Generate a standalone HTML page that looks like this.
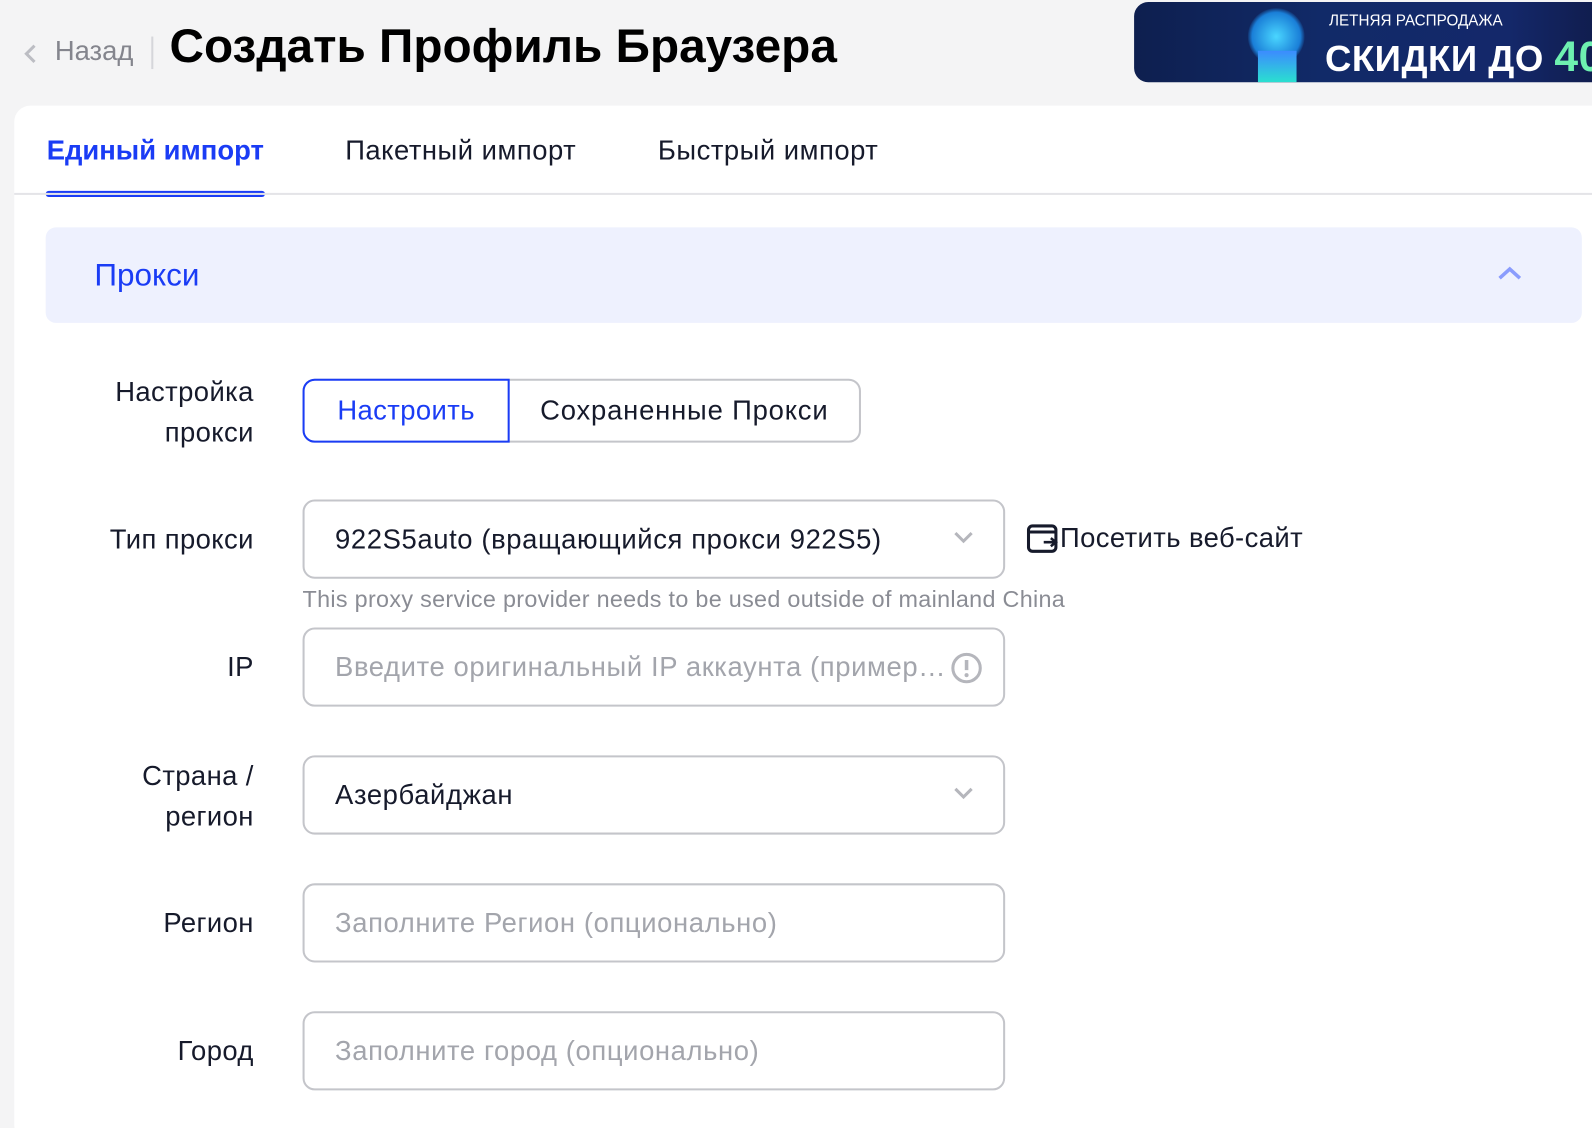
<!DOCTYPE html>
<html><head><meta charset="utf-8"><style>
*{box-sizing:border-box;margin:0;padding:0}
html,body{width:1592px;height:1128px;overflow:hidden}
body{background:#f4f4f5;font-family:"Liberation Sans","Noto Sans CJK SC",sans-serif;position:relative;color:#161a2b}
#w{position:absolute;left:0;top:0;width:1568px;height:1111px;transform:scale(1.0153);transform-origin:0 0}
.abs{position:absolute}
.card{position:absolute;left:14px;top:104px;width:1600px;height:1020px;background:#fff;border-radius:16px}
.lbl{position:absolute;right:1318px;text-align:right;font-size:27px;letter-spacing:0.4px;line-height:40px;color:#161a2b}
.inp{position:absolute;left:298px;width:692px;height:78px;border:2px solid #c4c5ca;border-radius:12px;font-size:27px;letter-spacing:0.6px;line-height:74px;padding-left:30px;white-space:nowrap;overflow:hidden}
.ph{color:#a3a5ac}
.chev{position:absolute;right:28px;top:28px}
</style></head><body><div id="w">
<svg class="abs" style="left:22px;top:42px" width="16" height="22" viewBox="0 0 16 22"><path d="M12 3 L4 11 L12 19" fill="none" stroke="#bcbdc3" stroke-width="3"/></svg>
<div class="abs" style="left:54px;top:35px;font-size:27px;color:#84858d">Назад</div>
<div class="abs" style="left:149px;top:36px;width:2px;height:32px;background:#d5d6da"></div>
<div class="abs" style="left:167px;top:17px;font-size:47px;font-weight:bold;color:#000">Создать Профиль Браузера</div>
<div class="abs" style="left:1117px;top:2px;width:460px;height:79px;border-radius:14px 0 0 14px;background:linear-gradient(90deg,#0e1f4f,#112a68 40%,#14286a 80%,#101c4c);overflow:hidden">
 <div class="abs" style="left:112px;top:6px;width:56px;height:56px;border-radius:50%;background:radial-gradient(circle,#4ad6ff,#1a7fd8 60%,transparent 72%)"></div>
 <div class="abs" style="left:122px;top:48px;width:38px;height:31px;background:linear-gradient(#3c8bff,#2ae0d0)"></div>
 <div class="abs" style="left:192px;top:10px;font-size:15px;color:#fff">ЛЕТНЯЯ РАСПРОДАЖА</div>
 <div class="abs" style="left:188px;top:30px;font-size:36px;font-weight:bold;color:#fff;white-space:nowrap;letter-spacing:0.5px">СКИДКИ ДО <span style="color:#6ef0b0;font-size:42px">40</span></div>
</div>
<div class="card"></div>
<div class="abs" style="left:46px;top:133px;font-size:27px;font-weight:bold;color:#1a3cf5">Единый импорт</div>
<div class="abs" style="left:45px;top:188px;width:216px;height:6px;border-radius:3px;background:#1a3cf5"></div>
<div class="abs" style="left:340px;top:133px;font-size:27px;color:#161a2b;letter-spacing:0.5px">Пакетный импорт</div>
<div class="abs" style="left:648px;top:133px;font-size:27px;color:#161a2b;letter-spacing:0.5px">Быстрый импорт</div>
<div class="abs" style="left:14px;top:190px;width:1600px;height:2px;background:#e4e4e8"></div>
<div class="abs" style="left:45px;top:224px;width:1513px;height:94px;border-radius:10px;background:#eef1fe"></div>
<div class="abs" style="left:93px;top:253px;font-size:31px;color:#1a3cf5">Прокси</div>
<svg class="abs" style="left:1474px;top:261px" width="26" height="16" viewBox="0 0 26 16"><path d="M3 13 L13 4 L23 13" fill="none" stroke="#8a9cfd" stroke-width="3.5"/></svg>

<div class="lbl" style="top:366px">Настройка<br>прокси</div>
<div class="abs" style="left:298px;top:373px;width:550px;height:63px;border:2px solid #c4c5ca;border-radius:12px"></div>
<div class="abs" style="left:298px;top:373px;width:204px;height:63px;border:2px solid #1a3cf5;border-radius:12px 0 0 12px;font-size:27px;line-height:59px;text-align:center;color:#1a3cf5;background:#fff;letter-spacing:0.4px">Настроить</div>
<div class="abs" style="left:502px;top:375px;width:344px;font-size:27px;line-height:59px;text-align:center;letter-spacing:0.8px">Сохраненные Прокси</div>

<div class="lbl" style="top:511px">Тип прокси</div>
<div class="inp" style="top:492px">922S5auto (вращающийся прокси 922S5)<svg class="chev" width="22" height="14" viewBox="0 0 22 14"><path d="M3 3 L11 11 L19 3" fill="none" stroke="#b5b6bc" stroke-width="3"/></svg></div>
<svg class="abs" style="left:1011px;top:516px" width="32" height="30" viewBox="0 0 32 30"><rect x="2" y="2" width="27" height="25" rx="4" fill="none" stroke="#161a2b" stroke-width="3"/><path d="M2 8 H29" stroke="#161a2b" stroke-width="3"/><path d="M17 18 H29 M24 14 L29 18 L24 22" fill="none" stroke="#161a2b" stroke-width="2.5"/></svg>
<div class="abs" style="left:1044px;top:515px;font-size:27px;letter-spacing:0.4px">Посетить веб-сайт</div>
<div class="abs" style="left:298px;top:577px;font-size:23px;letter-spacing:0.3px;color:#8a8c94">This proxy service provider needs to be used outside of mainland China</div>

<div class="lbl" style="top:637px">IP</div>
<div class="inp ph" style="top:618px">Введите оригинальный IP аккаунта (пример…<svg class="abs" style="right:20px;top:22px;background:#fff" width="32" height="32" viewBox="0 0 32 32"><circle cx="16" cy="16" r="13.5" fill="none" stroke="#b5b6bc" stroke-width="3"/><path d="M16 8 V18" stroke="#b5b6bc" stroke-width="3.5"/><circle cx="16" cy="23" r="2" fill="#b5b6bc"/></svg></div>

<div class="lbl" style="top:744px">Страна /<br>регион</div>
<div class="inp" style="top:744px">Азербайджан<svg class="chev" width="22" height="14" viewBox="0 0 22 14"><path d="M3 3 L11 11 L19 3" fill="none" stroke="#b5b6bc" stroke-width="3"/></svg></div>

<div class="lbl" style="top:889px">Регион</div>
<div class="inp ph" style="top:870px">Заполните Регион (опционально)</div>

<div class="lbl" style="top:1015px">Город</div>
<div class="inp ph" style="top:996px">Заполните город (опционально)</div>
</div></body></html>
